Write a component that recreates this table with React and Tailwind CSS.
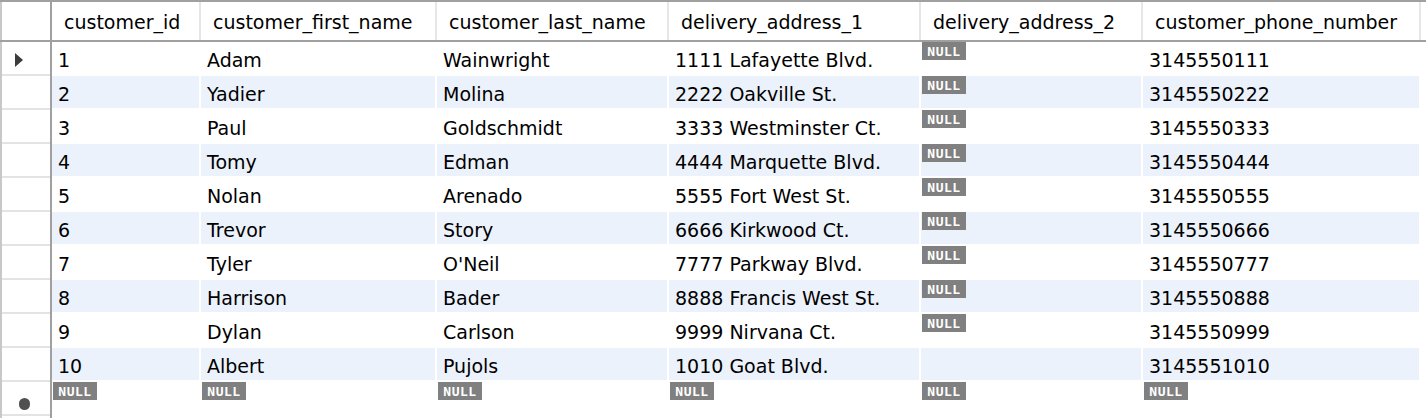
import React from "react";

const cols = [
  { key: "customer_id", w: "w-[147px]" },
  { key: "customer_first_name", w: "w-[234px]" },
  { key: "customer_last_name", w: "w-[230px]" },
  { key: "delivery_address_1", w: "w-[250px]" },
  { key: "delivery_address_2", w: "w-[220px]" },
  { key: "customer_phone_number", w: "w-[276px]" },
];

const N = "__NULL__";

const rows = [
  ["1", "Adam", "Wainwright", "1111 Lafayette Blvd.", N, "3145550111"],
  ["2", "Yadier", "Molina", "2222 Oakville St.", N, "3145550222"],
  ["3", "Paul", "Goldschmidt", "3333 Westminster Ct.", N, "3145550333"],
  ["4", "Tomy", "Edman", "4444 Marquette Blvd.", N, "3145550444"],
  ["5", "Nolan", "Arenado", "5555 Fort West St.", N, "3145550555"],
  ["6", "Trevor", "Story", "6666 Kirkwood Ct.", N, "3145550666"],
  ["7", "Tyler", "O'Neil", "7777 Parkway Blvd.", N, "3145550777"],
  ["8", "Harrison", "Bader", "8888 Francis West St.", N, "3145550888"],
  ["9", "Dylan", "Carlson", "9999 Nirvana Ct.", N, "3145550999"],
  ["10", "Albert", "Pujols", "1010 Goat Blvd.", "", "3145551010"],
];

function NullBadge() {
  return (
    <div className="ml-[1px] h-[18px] w-[44px] bg-[#808080] flex items-center justify-center text-white font-bold text-[13px] leading-none tracking-[0.5px] font-['DejaVu_Sans_Mono',monospace]">
      NULL
    </div>
  );
}

function RowHeader({ children }) {
  return (
    <div className="w-[52px] h-[34px] shrink-0 border-l-2 border-r-2 border-l-[#c8c8c8] border-r-[#a0a0a0] bg-white">
      <div className="h-[32px] flex items-center pl-[12px] pt-[3px]">{children}</div>
      <div className="h-[2px] bg-[#e3e3e3]" />
    </div>
  );
}

export default function App() {
  return (
    <div className="w-[1426px] h-[418px] bg-white overflow-hidden border-t-2 border-[#a0a0a0] font-['DejaVu_Sans',sans-serif] text-[19px] text-black leading-none">
      {/* header */}
      <div className="flex h-[40px] border-b-2 border-[#a0a0a0]">
        <div className="w-[52px] shrink-0 border-l-2 border-r-2 border-l-[#c8c8c8] border-r-[#a0a0a0]" />
        {cols.map((c) => (
          <div
            key={c.key}
            className={`${c.w} shrink-0 mr-[2px] relative flex items-center pl-[12px] pt-[2px]`}
          >
            {c.key}
            <div className="absolute right-[-2px] top-0 bottom-0 w-[2px] bg-[#e6e6e6]" />
          </div>
        ))}
      </div>

      {/* data rows */}
      {rows.map((r, i) => {
        const blue = i % 2 === 1;
        return (
          <div key={i} className="flex h-[34px]">
            <RowHeader>
              {i === 0 && (
                <svg width="10" height="16" viewBox="0 0 10 16">
                  <polygon points="1,1 9,8 1,15" fill="#3c3c3c" />
                </svg>
              )}
            </RowHeader>
            {cols.map((c, j) => (
              <div
                key={c.key}
                className={`${c.w} shrink-0 mr-[2px] h-[32px] ${
                  blue ? "bg-[#ecf2fb]" : "bg-white"
                } flex ${r[j] === N ? "items-start" : "items-center pl-[6px] pt-[4px]"}`}
              >
                {r[j] === N ? <NullBadge /> : r[j]}
              </div>
            ))}
          </div>
        );
      })}

      {/* new row */}
      <div className="flex h-[34px]">
        <div className="w-[52px] h-[34px] shrink-0 border-l-2 border-r-2 border-l-[#c8c8c8] border-r-[#a0a0a0]">
          <div className="h-[32px] pl-[17px] pt-[16px]">
            <div className="w-[11px] h-[12px] rounded-full bg-[#505050] blur-[0.6px]" />
          </div>
          <div className="h-[2px] bg-[#e3e3e3]" />
        </div>
        {cols.map((c) => (
          <div key={c.key} className={`${c.w} shrink-0 mr-[2px] h-[32px] flex items-start`}>
            <NullBadge />
          </div>
        ))}
      </div>
      <div className="flex h-[4px]">
        <div className="w-[52px] shrink-0 border-l-2 border-r-2 border-l-[#c8c8c8] border-r-[#a0a0a0]" />
      </div>
    </div>
  );
}
